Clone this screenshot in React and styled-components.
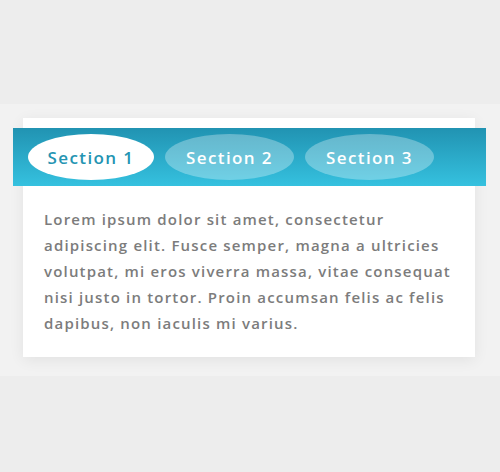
import React, { useState } from "react";
import styled, { createGlobalStyle } from "styled-components";

const GlobalStyle = createGlobalStyle`
  body {
    margin: 0;
    background: #ededed;
    font-family: "Open Sans", "DejaVu Sans", sans-serif;
  }
`;

const Page = styled.div`
  padding-top: 104px;
`;

const Band = styled.section`
  background: #f2f2f2;
  padding: 14px 25px 19px 23px;
`;

const Card = styled.div`
  background: #ffffff;
  padding: 10px 21px 21px;
  box-shadow: 0 3px 14px rgba(0, 0, 0, 0.07);
`;

const TabBar = styled.div`
  display: flex;
  gap: 11px;
  margin: 0 -32px 0 -31px;
  padding: 6px 15px;
  background: linear-gradient(#2193b2, #35c1df);
`;

const Tab = styled.button`
  height: 46px;
  width: ${(p) => p.width}px;
  border: none;
  border-radius: 50%;
  background: ${(p) => (p.active ? "#ffffff" : "rgba(255, 255, 255, 0.3)")};
  color: ${(p) => (p.active ? "#2494b2" : "#ffffff")};
  font-family: "Open Sans", sans-serif;
  font-weight: 600;
  font-size: 17px;
  letter-spacing: 1.4px;
  cursor: pointer;
  padding: 0;
`;

const Body = styled.p`
  margin: 20px 0 0;
  color: #7c7c7c;
  font-family: "Open Sans", sans-serif;
  font-weight: 600;
  font-size: 15px;
  line-height: 26px;
  letter-spacing: 1.18px;
`;

const TABS = [
  { label: "Section 1", width: 126 },
  { label: "Section 2", width: 129 },
  { label: "Section 3", width: 129 },
];

export default function App() {
  const [active, setActive] = useState(0);

  return (
    <Page>
      <GlobalStyle />
      <Band>
        <Card>
          <TabBar>
            {TABS.map((tab, i) => (
              <Tab
                key={tab.label}
                width={tab.width}
                active={i === active}
                onClick={() => setActive(i)}
              >
                {tab.label}
              </Tab>
            ))}
          </TabBar>
          <Body>
            Lorem ipsum dolor sit amet, consectetur adipiscing elit. Fusce
            semper, magna a ultricies volutpat, mi eros viverra massa, vitae
            consequat nisi justo in tortor. Proin accumsan felis ac felis
            dapibus, non iaculis mi varius.
          </Body>
        </Card>
      </Band>
    </Page>
  );
}
